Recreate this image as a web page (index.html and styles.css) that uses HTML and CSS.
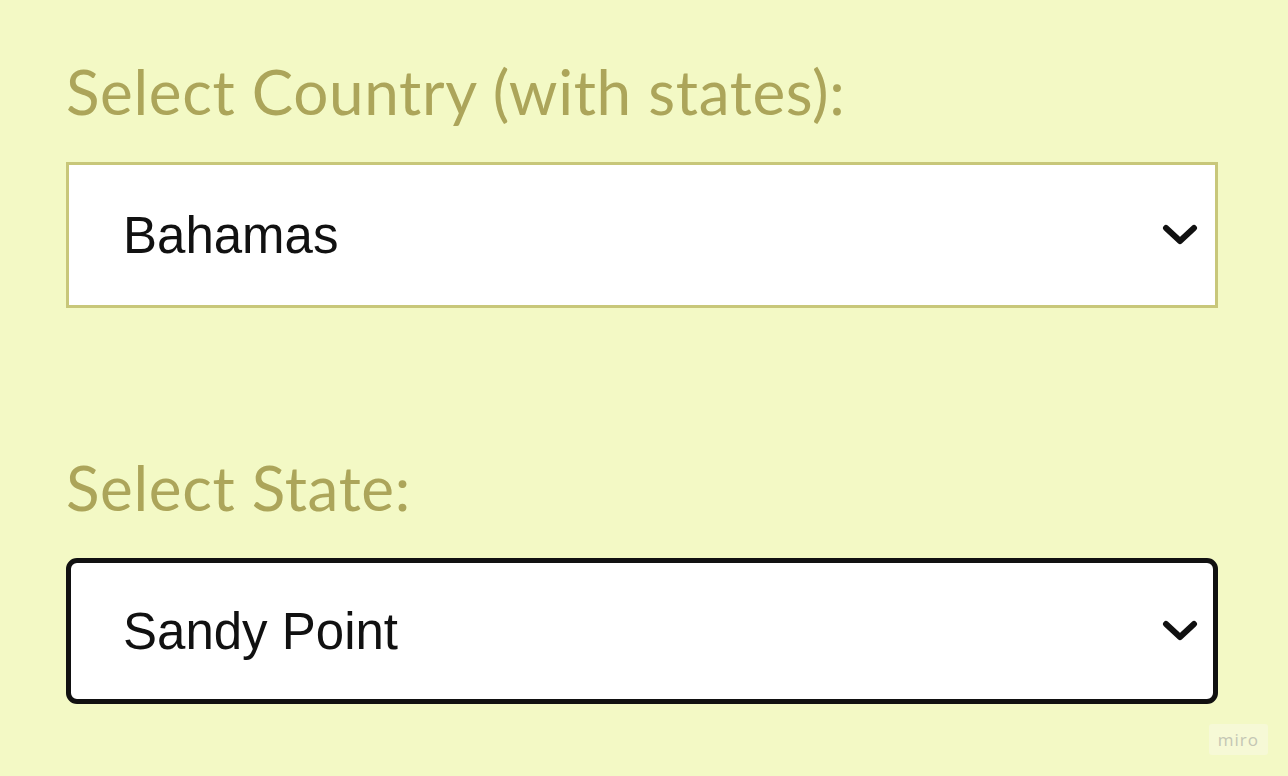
FILE: index.html
```html
<!DOCTYPE html>
<html lang="en">

<head>
    <meta charset="UTF-8">
    <meta name="viewport" content="width=device-width, initial-scale=1.0">
    <title>Select Country</title>
    <link rel="stylesheet" href="styles.css">
</head>

<body>
    <div class="form">
        <div class="field">
            <label class="field-label">Select Country (with states):</label>
            <div class="select select-country">
                <span class="select-value">Bahamas</span>
                <svg class="chevron" viewBox="0 0 36 24" width="36" height="24">
                    <path d="M4 5 L18 18 L32 5" fill="none" stroke="#111" stroke-width="6" stroke-linecap="round" stroke-linejoin="round"/>
                </svg>
            </div>
        </div>
        <div class="field">
            <label class="field-label">Select State:</label>
            <div class="select select-state">
                <span class="select-value">Sandy Point</span>
                <svg class="chevron" viewBox="0 0 36 24" width="36" height="24">
                    <path d="M4 5 L18 18 L32 5" fill="none" stroke="#111" stroke-width="6" stroke-linecap="round" stroke-linejoin="round"/>
                </svg>
            </div>
        </div>
    </div>
    <div class="badge">miro</div>
</body>

</html>
```

FILE: styles.css
```css
* {
    margin: 0;
    padding: 0;
    box-sizing: border-box;
}

body {
    background: #f3f9c5;
    width: 1288px;
    height: 776px;
    position: relative;
    overflow: hidden;
    font-family: "Liberation Sans", Arial, sans-serif;
}

.form {
    padding: 60px 70px 0 66px;
    display: flex;
    flex-direction: column;
    gap: 148px;
}

.field-label {
    display: block;
    font-family: Lato, "Open Sans", sans-serif;
    font-weight: 400;
    font-size: 62px;
    line-height: 62px;
    letter-spacing: 0.65px;
    color: #aca55a;
    margin-bottom: 40px;
}

.select {
    width: 1152px;
    height: 146px;
    background: #fff;
    display: flex;
    align-items: center;
    justify-content: space-between;
    padding: 0 17px 0 54px;
}

.select-country {
    border: 3px solid #c8c77a;
}

.select-state {
    border: 5px solid #111;
    border-radius: 11px;
    padding: 0 15px 0 52px;
}

.select-value {
    font-size: 51px;
    color: #111;
}

.badge {
    position: absolute;
    right: 20px;
    bottom: 21px;
    padding: 4px 9px;
    font-family: "Open Sans", sans-serif;
    font-size: 17px;
    letter-spacing: 1px;
    color: #c4c6b4;
    background: #f6f9d6;
    border-radius: 3px;
}
```
